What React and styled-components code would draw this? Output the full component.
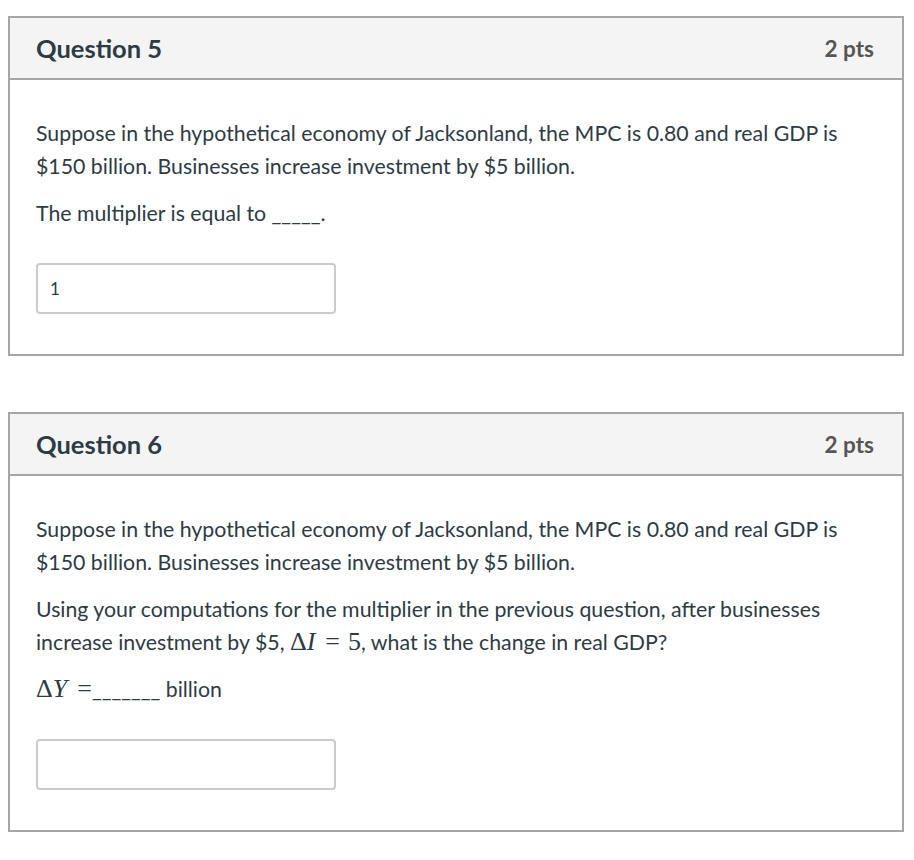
import React from "react";
import styled, { createGlobalStyle } from "styled-components";

const GlobalStyle = createGlobalStyle`
  html, body {
    margin: 0;
    padding: 0;
    background: #fff;
  }
  body {
    font-family: Lato, "Open Sans", sans-serif;
    color: #2d3b45;
  }
`;

const questions = [
  {
    id: 5,
    points: 2,
    answer: "1",
  },
  {
    id: 6,
    points: 2,
    answer: "",
  },
];

function App() {
  return (
    <Page>
      <GlobalStyle />
      <Card>
        <Header>
          <Title>Question 5</Title>
          <Points>2 pts</Points>
        </Header>
        <Body>
          <Text>
            Suppose in the hypothetical economy of Jacksonland, the MPC is 0.80
            and real GDP is $150 billion. Businesses increase investment by $5
            billion.
          </Text>
          <Text>The multiplier is equal to _____.</Text>
          <AnswerInput type="text" defaultValue={questions[0].answer} />
        </Body>
      </Card>
      <Card>
        <Header>
          <Title>Question 6</Title>
          <Points>2 pts</Points>
        </Header>
        <Body>
          <Text>
            Suppose in the hypothetical economy of Jacksonland, the MPC is 0.80
            and real GDP is $150 billion. Businesses increase investment by $5
            billion.
          </Text>
          <Text>
            Using your computations for the multiplier in the previous question,
            after businesses increase investment by $5,{" "}
            <Math>
              Δ<Var>I</Var>
              <Op>=</Op>5
            </Math>
            , what is the change in real GDP?
          </Text>
          <Text $gap={15}>
            <Math>
              Δ<Var>Y</Var>
              <Op $trailing>=</Op>
            </Math>
            _______ billion
          </Text>
          <AnswerInput type="text" defaultValue={questions[1].answer} />
        </Body>
      </Card>
    </Page>
  );
}

const Page = styled.div`
  display: flex;
  flex-direction: column;
  gap: 56px;
  padding: 16px 10px 20px 8px;
`;

const Card = styled.section`
  border: 2px solid #a6a6a6;
  background: #fff;
`;

const Header = styled.div`
  display: flex;
  align-items: center;
  justify-content: space-between;
  height: 60px;
  padding: 0 28px 0 26px;
  background: #f4f4f4;
  border-bottom: 2px solid #a6a6a6;
`;

const Title = styled.h2`
  margin: 0;
  font-size: 25.5px;
  font-weight: 700;
  color: #2d3b45;
`;

const Points = styled.span`
  font-size: 22.5px;
  font-weight: 700;
  color: #565656;
`;

const Body = styled.div`
  padding: 37px 26px 40px 26px;
`;

const Text = styled.p`
  margin: 0 0 ${(p) => p.$gap || 14}px;
  font-size: 21.3px;
  line-height: 33px;
  color: #2d3b45;
  max-width: 826px;
`;

const Math = styled.span`
  font-family: "Liberation Serif", "DejaVu Serif", serif;
  font-size: 26px;
  line-height: 1;
`;

const Var = styled.i`
  font-style: italic;
  padding-right: 2px;
`;

const Op = styled.span`
  padding: ${(p) => (p.$trailing ? "0 0 0 8px" : "0 8px")};
`;

const AnswerInput = styled.input`
  display: block;
  box-sizing: border-box;
  width: 300px;
  height: 51px;
  margin-top: 33px;
  padding: 0 12px;
  border: 2px solid #cbcbcb;
  border-radius: 4px;
  font-family: Lato, sans-serif;
  font-size: 17px;
  color: #2d3b45;
  background: #fff;
  outline: none;
`;

export default App;
